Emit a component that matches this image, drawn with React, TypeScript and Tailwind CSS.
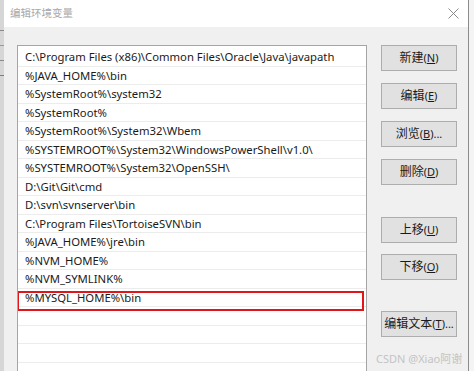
const paths = [
  "C:\\Program Files (x86)\\Common Files\\Oracle\\Java\\javapath",
  "%JAVA_HOME%\\bin",
  "%SystemRoot%\\system32",
  "%SystemRoot%",
  "%SystemRoot%\\System32\\Wbem",
  "%SYSTEMROOT%\\System32\\WindowsPowerShell\\v1.0\\",
  "%SYSTEMROOT%\\System32\\OpenSSH\\",
  "D:\\Git\\Git\\cmd",
  "D:\\svn\\svnserver\\bin",
  "C:\\Program Files\\TortoiseSVN\\bin",
  "%JAVA_HOME%\\jre\\bin",
  "%NVM_HOME%",
  "%NVM_SYMLINK%",
  "%MYSQL_HOME%\\bin",
  "",
  "",
  "",
];

type Btn = {label: string; key: string; suffix?: string; mt: string};

const buttons: Btn[] = [
  {label: "新建", key: "N", mt: "mt-0"},
  {label: "编辑", key: "E", mt: "mt-[12px]"},
  {label: "浏览", key: "B", suffix: "...", mt: "mt-[12px]"},
  {label: "删除", key: "D", mt: "mt-[12px]"},
  {label: "上移", key: "U", mt: "mt-[32px]"},
  {label: "下移", key: "O", mt: "mt-[11px]"},
  {label: "编辑文本", key: "T", suffix: "...", mt: "mt-[31px]"},
];

function WinButton({label, keyChar, suffix, mt}: {label: string; keyChar: string; suffix?: string; mt: string}) {
  return (
    <div
      className={`${mt} flex h-[26px] w-[76px] shrink-0 items-center justify-center border border-[#adadad] bg-[#e1e1e1] text-[12px] text-[#1a1a1a]`}
    >
      <span>
        {label}
        <span className="text-[11px]">
          (<span className="underline">{keyChar}</span>){suffix}
        </span>
      </span>
    </div>
  );
}

export default function App() {
  return (
    <div
      className="relative flex h-[371px] w-[474px] overflow-hidden bg-white"
      style={{fontFamily: '"Noto Sans", "Noto Sans CJK SC", sans-serif'}}
    >
      {/* window behind, peeking out at the left */}
      <div className="flex w-[4px] shrink-0 flex-col gap-[14px] bg-[#d6d6d6] pt-[30px]">
        <div className="h-px w-full bg-[#8a8a8a]" />
        <div className="h-px w-full bg-[#9a9a9a]" />
        <div className="h-px w-full bg-[#8a8a8a]" />
        <div className="h-px w-full bg-[#a07070]" />
      </div>

      <div className="flex min-h-0 flex-1 flex-col border-r border-[#8c8c8c]">
        <div className="flex h-[27px] shrink-0 items-center justify-between bg-white pl-[6px] pr-[8px]">
          <span className="text-[10.5px] text-[#a8a8a8]">编辑环境变量</span>
          <svg width="11" height="11" viewBox="0 0 11 11" className="mr-[1px]">
            <path d="M0.5 0.5 L10.5 10.5 M10.5 0.5 L0.5 10.5" stroke="#8a8a8a" strokeWidth="1" />
          </svg>
        </div>

        <div className="flex min-h-0 flex-1 overflow-hidden bg-[#f0f0f0] pl-[13px] pt-[18px]">
          <div className="relative w-[350px] shrink-0 overflow-hidden border border-b-0 border-[#a5a5a5] bg-white pt-[2px]">
            {paths.map((p, i) => (
              <div
                key={i}
                className="flex h-[18.5px] items-center border-b border-[#ececec] pl-[7px] text-[11.3px] leading-none whitespace-nowrap text-[#1a1a1a]"
              >
                {p}
              </div>
            ))}
            <div className="absolute left-[-1px] top-[245px] h-[20px] w-[347px] border-2 border-[#e0161b]" />
          </div>

          <div className="ml-[14px] flex flex-col">
            {buttons.map((b) => (
              <WinButton key={b.key} label={b.label} keyChar={b.key} suffix={b.suffix} mt={b.mt} />
            ))}
          </div>
        </div>
      </div>

      <div className="w-[5px] shrink-0 bg-[#f4f4f4]" />

      <div className="absolute left-[376px] top-[351px] text-[11px] text-[#c4c4c4]">CSDN @Xiao阿谢</div>
    </div>
  );
}
